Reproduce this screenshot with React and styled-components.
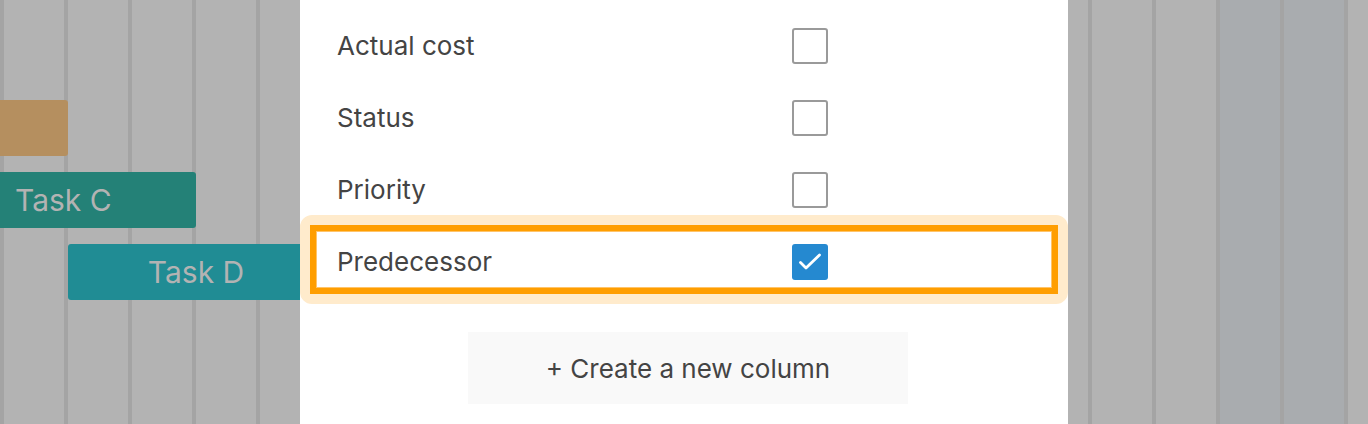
import React from "react";
import styled, { createGlobalStyle } from "styled-components";

const Global = createGlobalStyle`
  html, body { margin: 0; padding: 0; }
  body { font-family: Inter, "Noto Sans", sans-serif; background: #b3b3b3; }
`;

const Page = styled.div`
  position: relative;
  width: 1368px;
  height: 424px;
  overflow: hidden;
`;

const Timeline = styled.div`
  position: relative;
  display: flex;
  height: 100%;
`;

const DayColumn = styled.div`
  flex: 0 0 64px;
  height: 100%;
  box-sizing: border-box;
  border-left: 4px solid #a4a4a4;
  background: ${(p) => (p.$weekend ? "#a9acaf" : "#b3b3b3")};
`;

const TaskBar = styled.div`
  position: absolute;
  display: flex;
  align-items: center;
  justify-content: ${(p) => (p.$center ? "center" : "flex-start")};
  box-sizing: border-box;
  padding-left: ${(p) => (p.$center ? "0" : "15px")};
  height: 56px;
  border-radius: 3px;
  background: ${(p) => p.$color};
  color: #b3b3b3;
  font-size: 30px;
  font-weight: 400;
  white-space: nowrap;
`;

const Overlay = styled.div`
  position: absolute;
  inset: 0;
  display: flex;
  justify-content: center;
`;

const Modal = styled.div`
  width: 768px;
  height: 100%;
  background: #ffffff;
  box-sizing: border-box;
  padding-top: 10px;
  display: flex;
  flex-direction: column;
`;

const Row = styled.div`
  position: relative;
  display: grid;
  grid-template-columns: 455px 36px;
  align-items: center;
  height: 72px;
  padding-left: 37px;
`;

const Label = styled.span`
  font-size: 26px;
  color: #444444;
  line-height: 1;
`;

const Box = styled.span`
  width: 36px;
  height: 36px;
  box-sizing: border-box;
  border-radius: 3px;
  display: flex;
  border: ${(p) => (p.$checked ? "none" : "2px solid #9a9a9a")};
  background: ${(p) => (p.$checked ? "#2589d0" : "#ffffff")};
`;

const Spotlight = styled.div`
  position: absolute;
  top: -11px;
  bottom: -6px;
  left: 0;
  right: 0;
  border: 10px solid #ffebcc;
  border-radius: 12px;
  pointer-events: none;
  &::after {
    content: "";
    position: absolute;
    inset: 0;
    border: 6px solid #ff9e00;
    box-shadow: inset 0 0 0 1px #ffc46a;
  }
`;

const Footer = styled.div`
  display: flex;
  justify-content: center;
  padding-top: 34px;
  padding-left: 8px;
`;

const CreateButton = styled.button`
  width: 440px;
  height: 72px;
  border: none;
  background: #f9f9f9;
  color: #444444;
  font-family: Inter, "Noto Sans", sans-serif;
  font-size: 26px;
  cursor: pointer;
`;

const Check = () => (
  <svg width="36" height="36" viewBox="0 0 36 36" fill="none">
    <path d="M8.5 18.5 L14 24 L27.5 11" stroke="#ffffff" strokeWidth="2.8" strokeLinecap="round" strokeLinejoin="round" />
  </svg>
);

const columns = [
  { label: "Actual cost", checked: false },
  { label: "Status", checked: false },
  { label: "Priority", checked: false },
  { label: "Predecessor", checked: true, highlight: true },
];

export default function App() {
  const days = Array.from({ length: 22 }, (_, i) => i);
  return (
    <>
      <Global />
      <Page>
        <Timeline>
          {days.map((d) => (
            <DayColumn key={d} $weekend={d === 19 || d === 20} />
          ))}
          <TaskBar $color="#b58f5f" style={{ left: -20, width: 88, top: 100 }} />
          <TaskBar $color="#248177" style={{ left: -20, width: 216, top: 172, paddingLeft: 35 }}>
            Task C
          </TaskBar>
          <TaskBar $color="#208c94" $center style={{ left: 68, width: 256, top: 244 }}>
            Task D
          </TaskBar>
        </Timeline>
        <Overlay>
          <Modal>
            {columns.map((c) => (
              <Row key={c.label}>
                <Label>{c.label}</Label>
                <Box $checked={c.checked}>{c.checked && <Check />}</Box>
                {c.highlight && <Spotlight />}
              </Row>
            ))}
            <Footer>
              <CreateButton>+ Create a new column</CreateButton>
            </Footer>
          </Modal>
        </Overlay>
      </Page>
    </>
  );
}
